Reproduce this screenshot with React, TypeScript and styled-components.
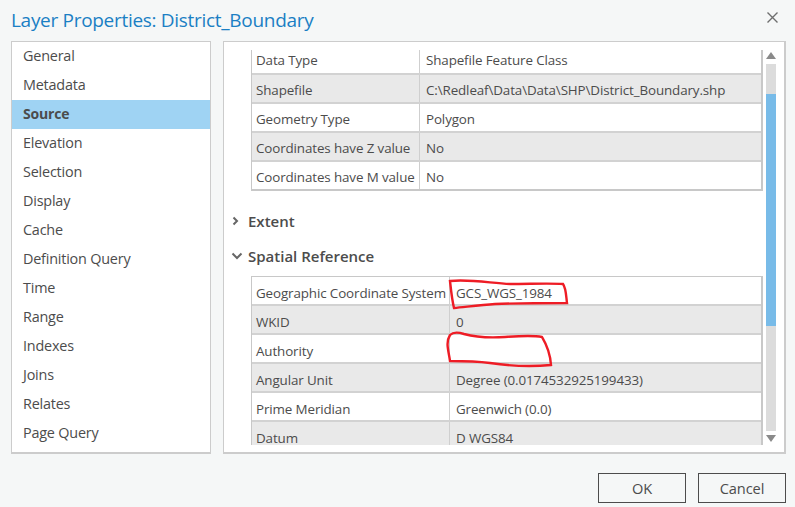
import React from "react";
import styled, { createGlobalStyle } from "styled-components";

const FONT = `"Open Sans", "Noto Sans", "Liberation Sans", sans-serif`;

const GlobalStyle = createGlobalStyle`
  html, body {
    margin: 0;
    padding: 0;
    background: #f5f7f7;
  }
  * {
    box-sizing: border-box;
  }
`;

const Dialog = styled.div`
  position: relative;
  width: 795px;
  height: 507px;
  overflow: hidden;
  display: flex;
  flex-direction: column;
  background: #f5f7f7;
  font-family: ${FONT};
  color: #4c4c4c;
`;

const Header = styled.div`
  height: 41px;
  flex: none;
  display: flex;
  justify-content: space-between;
  padding: 7px 16px 0 11px;
`;

const Title = styled.div`
  font-size: 19px;
  line-height: 26px;
  color: #1b7fc4;
  letter-spacing: -0.3px;
`;

const CloseButton = styled.div`
  width: 13px;
  height: 13px;
  margin-top: 4px;
  color: #6e6e6e;
  svg {
    display: block;
  }
`;

const Body = styled.div`
  height: 413px;
  flex: none;
  display: flex;
  gap: 12px;
  padding: 0 9px 0 11px;
`;

const Sidebar = styled.div`
  width: 200px;
  border: 1px solid #cccccc;
  border-width: 1px 1px 2px 1px;
  background: #ffffff;
  display: flex;
  flex-direction: column;
`;

const NavItem = styled.div<{ $active?: boolean }>`
  height: 29px;
  flex: none;
  padding-left: 11px;
  font-size: ${(p) => (p.$active ? 14 : 14.4)}px;
  line-height: 28px;
  letter-spacing: -0.2px;
  font-weight: ${(p) => (p.$active ? 700 : 400)};
  background: ${(p) => (p.$active ? "#9fd3f3" : "transparent")};
`;

const Panel = styled.div`
  flex: 1;
  display: flex;
  border: 1px solid #cccccc;
  border-width: 1px 2px 2px 1px;
  background: #ffffff;
  padding: 8px 8px 7px 7px;
  gap: 3px;
`;

const Content = styled.div`
  width: 532px;
  flex: none;
  overflow: hidden;
  display: flex;
  flex-direction: column;
  padding-left: 20px;
`;

const PropTable = styled.div<{ $closed?: boolean }>`
  flex: none;
  line-height: ${(p) => (p.$closed ? 30 : 33)}px;
  border-left: 1px solid #c8c8c8;
  border-top: ${(p) => (p.$closed ? "none" : "1px solid #c8c8c8")};
  border-right: 2px solid #c8c8c8;
  border-bottom: ${(p) => (p.$closed ? "2px solid #c8c8c8" : "none")};
`;

const Row = styled.div<{ $labelWidth: number; $shaded: boolean; $short?: boolean }>`
  height: ${(p) => (p.$short ? 25 : 29)}px;
  ${(p) => (p.$short ? "line-height: 21px;" : "")}
  display: grid;
  grid-template-columns: ${(p) => p.$labelWidth}px 1fr;
  background: ${(p) => (p.$shaded ? "#e9e9e9" : "#ffffff")};
  border-bottom: 2px solid #d2d2d2;

  &:last-child {
    border-bottom: none;
    height: 27px;
  }
`;

const Cell = styled.div`
  padding-left: 4px;
  font-size: 13.4px;
  letter-spacing: -0.12px;
  white-space: nowrap;
  overflow: hidden;
`;

const ValueCell = styled(Cell)`
  border-left: 1px solid #cfcfcf;
  padding-left: 6px;
`;

const SectionHeader = styled.div<{ $top: number; $bottom: number }>`
  display: flex;
  align-items: center;
  height: 22px;
  flex: none;
  margin-top: ${(p) => p.$top}px;
  margin-bottom: ${(p) => p.$bottom}px;
  margin-left: -20px;
  font-size: 15px;
  font-weight: 600;
  letter-spacing: 0;
  color: #4c4c4c;
`;

const Chevron = styled.span`
  width: 16px;
  height: 10px;
  flex: none;
  margin-right: 1px;
  color: #666666;
  svg {
    display: block;
  }
`;

const Scrollbar = styled.div`
  width: 10px;
  flex: none;
  display: flex;
  flex-direction: column;
  background: #dcdcdc;
`;

const ScrollArrow = styled.div`
  height: 14px;
  flex: none;
  background: #ffffff;
  svg {
    display: block;
  }
`;

const ScrollTrack = styled.div`
  flex: 1;
  padding-top: 30px;
  padding-bottom: 105px;
  display: flex;
`;

const ScrollThumb = styled.div`
  flex: 1;
  background: #78bbe8;
`;

const Footer = styled.div`
  flex: 1;
  display: flex;
  justify-content: flex-end;
  gap: 12px;
  padding: 19px 9px 0 0;
`;

const Button = styled.div`
  width: 88px;
  height: 30px;
  border: 1px solid #4c4c4c;
  display: flex;
  align-items: center;
  justify-content: center;
  font-size: 14.6px;
  letter-spacing: -0.1px;
`;

const Scribble = styled.svg`
  position: absolute;
  left: 0;
  top: 0;
  pointer-events: none;
`;

const navItems = [
  "General",
  "Metadata",
  "Source",
  "Elevation",
  "Selection",
  "Display",
  "Cache",
  "Definition Query",
  "Time",
  "Range",
  "Indexes",
  "Joins",
  "Relates",
  "Page Query",
];

const sourceRows = [
  ["Data Type", "Shapefile Feature Class"],
  ["Shapefile", "C:\\Redleaf\\Data\\Data\\SHP\\District_Boundary.shp"],
  ["Geometry Type", "Polygon"],
  ["Coordinates have Z value", "No"],
  ["Coordinates have M value", "No"],
];

const spatialRows = [
  ["Geographic Coordinate System", "GCS_WGS_1984"],
  ["WKID", "0"],
  ["Authority", ""],
  ["Angular Unit", "Degree (0.0174532925199433)"],
  ["Prime Meridian", "Greenwich (0.0)"],
  ["Datum", "D WGS84"],
];

const ChevronRight = () => (
  <svg width="10" height="10" viewBox="0 0 10 10">
    <path d="M2.5 1.5 L6 5 L2.5 8.5" fill="none" stroke="currentColor" strokeWidth="2" />
  </svg>
);

const ChevronDown = () => (
  <svg width="12" height="10" viewBox="0 0 12 10">
    <path d="M1.5 2.5 L6 7 L10.5 2.5" fill="none" stroke="currentColor" strokeWidth="2" />
  </svg>
);

const PropertyRows = ({
  rows,
  labelWidth,
  shortFirst,
}: {
  rows: string[][];
  labelWidth: number;
  shortFirst?: boolean;
}) => (
  <>
    {rows.map(([label, value], i) => (
      <Row key={label} $labelWidth={labelWidth} $shaded={i % 2 === 1} $short={shortFirst && i === 0}>
        <Cell>{label}</Cell>
        <ValueCell>{value}</ValueCell>
      </Row>
    ))}
  </>
);

export default function App() {
  return (
    <Dialog>
      <GlobalStyle />
      <Header>
        <Title>Layer Properties: District_Boundary</Title>
        <CloseButton>
          <svg width="13" height="13" viewBox="0 0 13 13">
            <path d="M1.5 1.5 L11.5 11.5 M11.5 1.5 L1.5 11.5" stroke="currentColor" strokeWidth="1.4" />
          </svg>
        </CloseButton>
      </Header>
      <Body>
        <Sidebar>
          {navItems.map((item) => (
            <NavItem key={item} $active={item === "Source"}>
              {item}
            </NavItem>
          ))}
        </Sidebar>
        <Panel>
          <Content>
            <PropTable $closed>
              <PropertyRows rows={sourceRows} labelWidth={167} shortFirst />
            </PropTable>
            <SectionHeader $top={19} $bottom={0}>
              <Chevron>
                <ChevronRight />
              </Chevron>
              Extent
            </SectionHeader>
            <SectionHeader $top={13} $bottom={9}>
              <Chevron>
                <ChevronDown />
              </Chevron>
              Spatial Reference
            </SectionHeader>
            <PropTable>
              <PropertyRows rows={spatialRows} labelWidth={197} />
            </PropTable>
          </Content>
          <Scrollbar>
            <ScrollArrow>
              <svg width="10" height="14" viewBox="0 0 10 14">
                <path d="M5 2 L10 9 L0 9 Z" fill="#8a8a8a" />
              </svg>
            </ScrollArrow>
            <ScrollTrack>
              <ScrollThumb />
            </ScrollTrack>
            <ScrollArrow>
              <svg width="10" height="14" viewBox="0 0 10 14">
                <path d="M0 4 L10 4 L5 11 Z" fill="#8a8a8a" />
              </svg>
            </ScrollArrow>
          </Scrollbar>
        </Panel>
      </Body>
      <Footer>
        <Button>OK</Button>
        <Button>Cancel</Button>
      </Footer>
      <Scribble width="795" height="507" viewBox="0 0 795 507">
        <path
          d="M450 281 C470 279 490 283 510 284 C530 284 550 283 563 284 C566 288 566 295 567 303 C545 303 520 303 495 304 C480 305 465 307 454 308 C452 300 451 290 450 281 Z"
          fill="none"
          stroke="#ee1c25"
          strokeWidth="2.4"
        />
        <path
          d="M450 335 C453 332 458 332 464 334 C475 337 490 338 505 337 C520 336 532 335 542 337 C545 342 550 350 551 365 C530 367 510 366 490 363 C475 361 460 361 450 361 C449 352 445 343 450 335 Z"
          fill="none"
          stroke="#ee1c25"
          strokeWidth="2.4"
        />
      </Scribble>
    </Dialog>
  );
}
